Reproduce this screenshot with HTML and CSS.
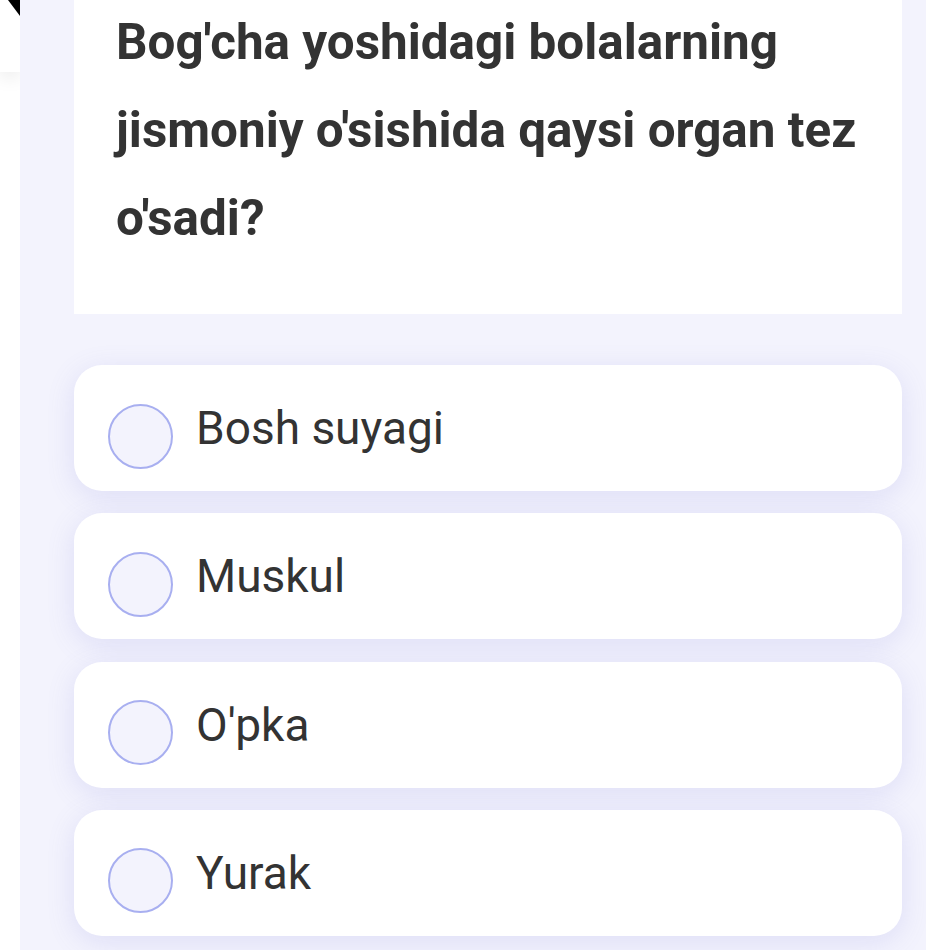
FILE: index.html
```html
<!DOCTYPE html>
<html lang="uz">
<head>
    <meta charset="UTF-8">
    <meta name="viewport" content="width=device-width, initial-scale=1.0">
    <title>Test</title>
    <link rel="stylesheet" href="styles.css">
</head>
<body>
<div id="wrap">
    <aside class="side">
        <div class="side_top">
            <svg class="side_mark" width="20" height="20" viewBox="0 0 20 20">
                <polygon points="8,0 20,0 20,16" fill="#000"/>
            </svg>
        </div>
    </aside>

    <main class="main">
        <div class="question">
            Bog'cha yoshidagi bolalarning jismoniy o'sishida qaysi organ tez o'sadi?
        </div>

        <ul class="answers">
            <li class="answer">
                <span class="radio"></span>
                <span class="answer_text">Bosh suyagi</span>
            </li>
            <li class="answer">
                <span class="radio"></span>
                <span class="answer_text">Muskul</span>
            </li>
            <li class="answer">
                <span class="radio"></span>
                <span class="answer_text">O'pka</span>
            </li>
            <li class="answer">
                <span class="radio"></span>
                <span class="answer_text">Yurak</span>
            </li>
        </ul>
    </main>
</div>
</body>
</html>
```

FILE: styles.css
```css
body {
    margin: 0;
    font-family: Roboto, "Noto Sans", Arial, sans-serif;
    color: #333;
    background: #fff;
}
ul {
    list-style: none;
    padding: 0;
    margin: 0;
}

#wrap {
    display: flex;
    height: 950px;
    overflow: hidden;
}

.side {
    width: 20px;
    flex-shrink: 0;
    background: #fff;
    position: relative;
    z-index: 1;
}
.side_top {
    height: 72px;
    background: #fff;
    box-shadow: 0 6px 18px rgba(0, 0, 0, 0.08);
}
.side_mark {
    display: block;
}

.main {
    flex: 1;
    background: #f3f3fd;
    padding: 0 24px 0 54px;
    position: relative;
    z-index: 2;
}

.question {
    background: #fff;
    font-size: 49.4px;
    font-weight: 700;
    line-height: 88px;
    padding: 0 20px 52px 42px;
    margin-top: -2px;
}

.answers {
    margin-top: 51px;
    display: flex;
    flex-direction: column;
    gap: 22.3px;
}
.answer {
    height: 126px;
    background: #fff;
    border-radius: 28px;
    box-shadow: 0 6px 28px rgba(110, 110, 210, 0.16);
    display: flex;
    align-items: center;
    padding-left: 34px;
}
.radio {
    width: 61px;
    height: 61px;
    border: 2px solid #a8aff0;
    border-radius: 50%;
    background: #f3f3fd;
    margin-top: 16px;
    flex-shrink: 0;
}
.answer_text {
    font-size: 46px;
    margin-left: 23px;
}
```
